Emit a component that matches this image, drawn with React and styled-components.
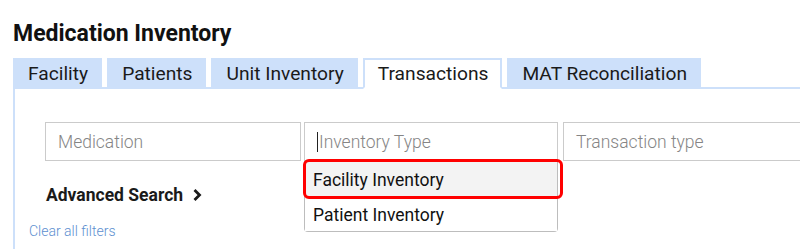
import React from "react";
import styled, { createGlobalStyle } from "styled-components";

const GlobalStyle = createGlobalStyle`
  body {
    margin: 0;
    background: #fff;
    font-family: Roboto, "Liberation Sans", sans-serif;
    color: #111;
  }
`;

const Page = styled.div`
  padding: 19px 0 0 13px;
  height: 249px;
  box-sizing: border-box;
  overflow: hidden;
`;

const Title = styled.h1`
  margin: 0 0 9px;
  font-size: 23px;
  line-height: 30px;
  font-weight: 700;
  color: #111;
`;

const TabRow = styled.div`
  display: flex;
  gap: 5px;
  align-items: flex-end;
  position: relative;
  z-index: 1;
  margin-bottom: -2px;
`;

const Tab = styled.div`
  height: 31px;
  box-sizing: border-box;
  padding: 0 12px 0 13px;
  display: flex;
  align-items: center;
  font-size: 19.2px;
  color: #1a1a1a;
  background: ${(p) => (p.$active ? "#fff" : "#cde0fa")};
  border: 2px solid #cde0fa;
  border-bottom: ${(p) => (p.$active ? "2px solid #fff" : "2px solid #cde0fa")};
`;

const Panel = styled.div`
  border-top: 2px solid #cde0fa;
  border-left: 2px solid #cde0fa;
  padding: 33px 0 0 14px;
  height: 200px;
`;

const FieldRow = styled.div`
  display: flex;
  padding-left: 16px;
`;

const Field = styled.div`
  position: relative;
  flex: 0 0 ${(p) => p.$w}px;
  margin-left: ${(p) => p.$ml || 0}px;
`;

const Input = styled.div`
  height: 39px;
  box-sizing: border-box;
  border: 1px solid #cbcbcb;
  padding: 0 12px;
  display: flex;
  align-items: center;
  font-size: 17.5px;
  font-weight: 300;
  color: #858585;
`;

const Caret = styled.span`
  display: inline-block;
  width: 1px;
  height: 20px;
  background: #222;
  margin-right: 1px;
`;

const Menu = styled.div`
  position: absolute;
  top: 39px;
  left: 0;
  right: 0;
  border: 1px solid #bdbdbd;
  border-top: none;
  border-radius: 0 0 4px 4px;
  background: #fff;
  z-index: 2;
`;

const Option = styled.div`
  position: relative;
  height: ${(p) => p.$h}px;
  box-sizing: border-box;
  padding: 0 8px;
  display: flex;
  align-items: center;
  font-size: 17.5px;
  color: #111;
  background: ${(p) => (p.$hover ? "#f3f3f3" : "#fff")};
`;

const Highlight = styled.div`
  position: absolute;
  left: -2px;
  right: -6px;
  top: -2px;
  bottom: 0;
  border: 3px solid #f00;
  border-radius: 6px;
  pointer-events: none;
`;

const Advanced = styled.div`
  display: flex;
  align-items: center;
  gap: 9px;
  margin: 24px 0 0 17px;
  font-size: 17.5px;
  font-weight: 700;
  color: #1a1a1a;
`;

const Clear = styled.div`
  margin: 18px 0 0 0;
  font-size: 14px;
  font-weight: 300;
  color: #5d8fd0;
`;

export default function App() {
  return (
    <>
      <GlobalStyle />
      <Page>
        <Title>Medication Inventory</Title>
        <TabRow>
          <Tab>Facility</Tab>
          <Tab>Patients</Tab>
          <Tab>Unit Inventory</Tab>
          <Tab $active>Transactions</Tab>
          <Tab>MAT Reconciliation</Tab>
        </TabRow>
        <Panel>
          <FieldRow>
            <Field $w={256}>
              <Input>Medication</Input>
            </Field>
            <Field $w={254} $ml={3}>
              <Input>
                <Caret />
                Inventory Type
              </Input>
              <Menu>
                <Option $h={38} $hover>
                  Facility Inventory
                  <Highlight />
                </Option>
                <Option $h={32}>Patient Inventory</Option>
              </Menu>
            </Field>
            <Field $w={260} $ml={5}>
              <Input>Transaction type</Input>
            </Field>
          </FieldRow>
          <Advanced>
            Advanced Search
            <svg width="10" height="14" viewBox="0 0 10 14">
              <path d="M2.5 2 L7.5 7 L2.5 12" fill="none" stroke="#1a1a1a" strokeWidth="2.8" />
            </svg>
          </Advanced>
          <Clear>Clear all filters</Clear>
        </Panel>
      </Page>
    </>
  );
}
